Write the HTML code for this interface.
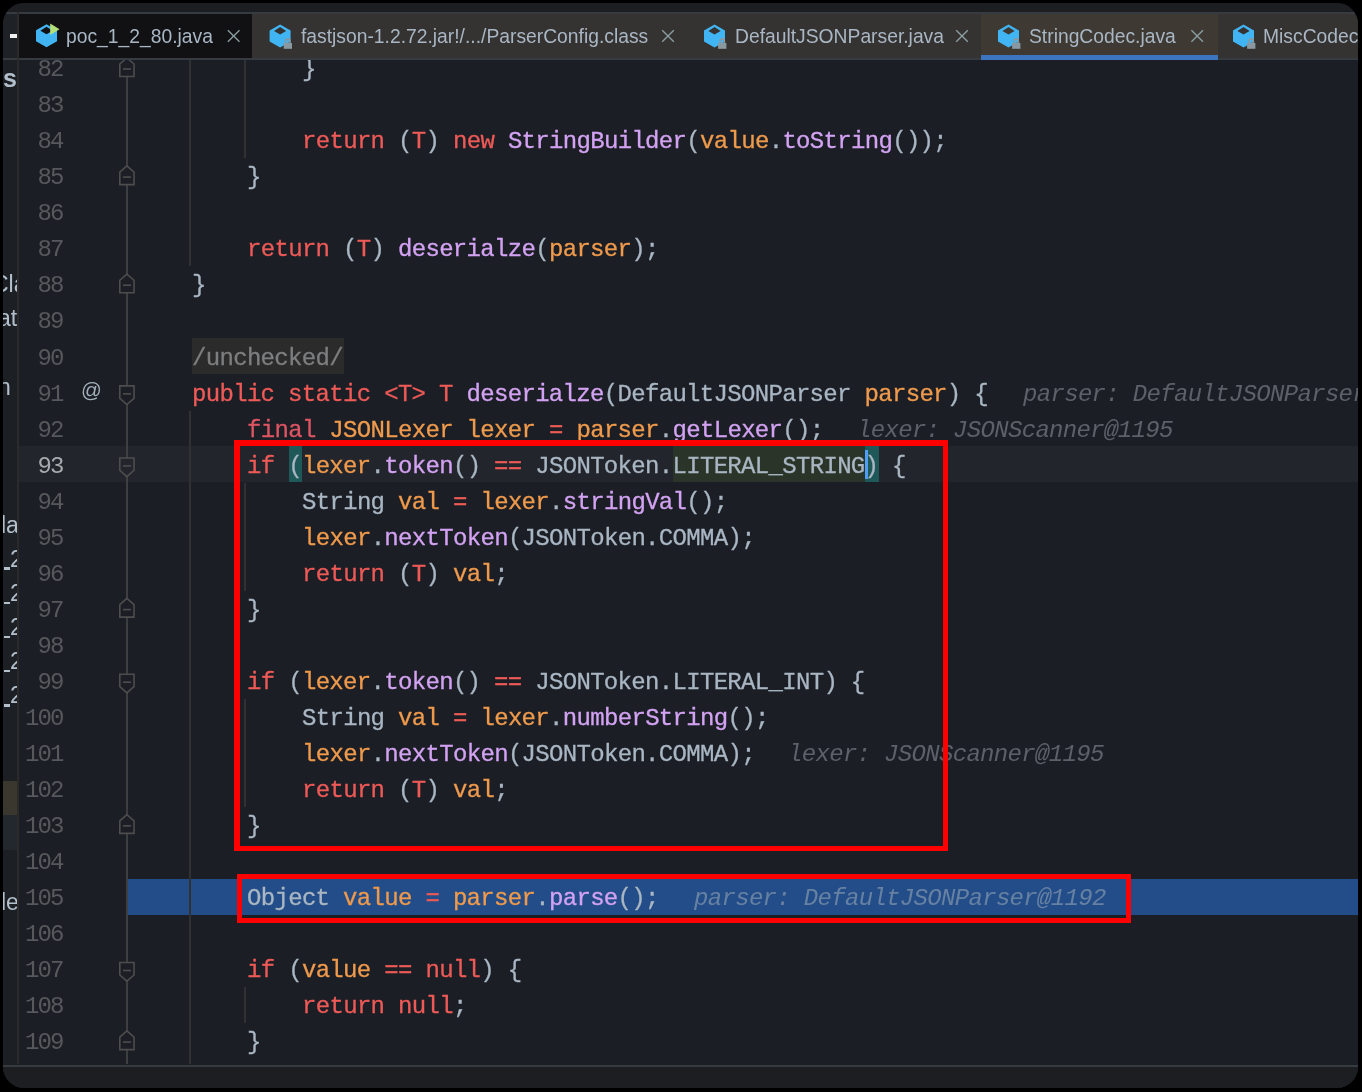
<!DOCTYPE html>
<html><head><meta charset="utf-8">
<style>
.ln,.hint,.num,.tabtxt,.side,.aa{will-change:transform}
html,body{margin:0;padding:0;background:#000;width:1362px;height:1092px;overflow:hidden}
#win{position:absolute;left:3px;top:3px;width:1355.4px;height:1085px;border-radius:21px;overflow:hidden;background:#1c1e22}
.abs{position:absolute}
.ln,.hint,.num{position:absolute;font-family:"Liberation Mono",monospace;font-size:24px;line-height:36px;letter-spacing:-0.680px;white-space:pre;height:36px;-webkit-text-stroke:0.3px currentColor}
.kw{color:#ee5a57} .kw2{color:#dd5563} .fn{color:#d3a2f2} .var{color:#ef9a4c} .txt{color:#a9b6c3}
.ident{color:#a9b6c3}
.brace{color:#a9b6c3}
.fold{color:#7d7e7f}
.hint{color:#5c6068;font-style:italic;-webkit-text-stroke:0}
.hint.sel{color:#6781a3}
.num{-webkit-text-stroke:0;color:#56585c;left:0;width:62.5px;text-align:right;letter-spacing:-1.9px}
.num.cur{color:#a7abae}
.tabtxt{position:absolute;top:15.2px;height:44px;line-height:44px;font-family:"Liberation Sans",sans-serif;font-size:19.3px;color:#a9b6c4;white-space:pre}
.side{position:absolute;left:0;font-family:"Liberation Sans",sans-serif;font-size:23px;line-height:30px;color:#b3c0cc;white-space:pre}
</style></head><body>
<div id="win">
  <!-- frame top strip -->
  <div class="abs" style="left:0;top:0;width:1356px;height:9px;background:#1c1e22"></div>
  <div class="abs" style="left:0;top:9px;width:1356px;height:2px;background:#363b42"></div>
  <!-- tab bar -->
  <div class="abs" style="left:0;top:11px;width:1356px;height:44px;background:#1e2126"></div>
  <div class="abs" style="left:16px;top:11px;width:233px;height:44px;background:#111113"></div>
  <div class="abs" style="left:249px;top:11px;width:729px;height:44px;background:#353331"></div>
  <div class="abs" style="left:978px;top:11px;width:237px;height:44px;background:#3e3a33"></div>
  <div class="abs" style="left:1215px;top:11px;width:141px;height:44px;background:#353331"></div>
  <div class="abs" style="left:0;top:55px;width:1356px;height:2px;background:#363b42"></div>
  <div class="abs" style="left:978px;top:52px;width:237px;height:5px;background:#3d74c0"></div>
  <!-- editor bg -->
  <div class="abs" style="left:0;top:57px;width:1356px;height:1004px;background:#1b1e25"></div>
  <!-- sidebar -->
  <div class="abs" style="left:0;top:57px;width:14px;height:1004px;background:#1c1f24"></div>
  <div class="abs" style="left:14px;top:9px;width:2px;height:1052px;background:#2b2a29"></div>
  <!-- bottom -->
  <div class="abs" style="left:0;top:1061.8px;width:1356px;height:1.8px;background:#363b42"></div>
  <div class="abs" style="left:0;top:1063.6px;width:1356px;height:22px;background:#1c1e22"></div>
</div>
<!-- page-level absolute content (coordinates in image px) -->
<div class="abs" style="left:3px;top:60px;width:1355.4px;height:1004.8px;overflow:hidden">
 <div class="abs" style="left:-3px;top:-60px;width:1362px;height:1092px">
  <!-- current line 93 -->
  <div class="abs" style="left:19px;top:445.8px;width:1340px;height:36.2px;background:#22252c"></div>
  <div class="abs" style="left:192.4px;top:338px;width:151.2px;height:36px;background:#2b2b2c"></div>
  <div class="abs" style="left:288.5px;top:446px;width:13.7px;height:36px;background:#1f5859"></div>
  <div class="abs" style="left:865px;top:446px;width:14px;height:36px;background:#1f5859"></div>
  <div class="abs" style="left:673px;top:446.4px;width:192.2px;height:35.6px;background:#2a3428"></div>
  <!-- selection line 105 -->
  <div class="abs" style="left:128px;top:879px;width:1231px;height:36px;background:#234d88"></div>
  <!-- indent guides -->
  <div class="abs" style="left:189px;top:60px;width:1.5px;height:206.44px;background:#303133"></div>
  <div class="abs" style="left:189px;top:410.60px;width:1.5px;height:653.40px;background:#303133"></div>
  <div class="abs" style="left:244px;top:60px;width:1.5px;height:98.32px;background:#303133"></div>
  <div class="abs" style="left:244px;top:482.68px;width:1.5px;height:108px;background:#303133"></div>
  <div class="abs" style="left:244px;top:698.92px;width:1.5px;height:108px;background:#303133"></div>
  <div class="abs" style="left:244px;top:987.24px;width:1.5px;height:36px;background:#303133"></div>
  <!-- fold line + markers -->
  <svg class="abs" style="left:0;top:0" width="1362" height="1092">
   <path d="M127,60 V1064" stroke="#4a4a4a" stroke-width="1.5"/>
   <path d="M119.8,76.5 H134 V64.0 L126.9,57.8 L119.8,64.0 Z" fill="#1b1e25" stroke="#4d4d4d" stroke-width="1.6"/>
<path d="M123,69.0 H131" stroke="#4d4d4d" stroke-width="1.6"/>
<path d="M119.8,184.62 H134 V172.12 L126.9,165.92000000000002 L119.8,172.12 Z" fill="#1b1e25" stroke="#4d4d4d" stroke-width="1.6"/>
<path d="M123,177.12 H131" stroke="#4d4d4d" stroke-width="1.6"/>
<path d="M119.8,292.74 H134 V280.24 L126.9,274.04 L119.8,280.24 Z" fill="#1b1e25" stroke="#4d4d4d" stroke-width="1.6"/>
<path d="M123,285.24 H131" stroke="#4d4d4d" stroke-width="1.6"/>
<path d="M119.8,385.86 H134 V398.36 L126.9,404.56 L119.8,398.36 Z" fill="#1b1e25" stroke="#4d4d4d" stroke-width="1.6"/>
<path d="M123,393.86 H131" stroke="#4d4d4d" stroke-width="1.6"/>
<path d="M119.8,457.94 H134 V470.44 L126.9,476.64 L119.8,470.44 Z" fill="#22252c" stroke="#4d4d4d" stroke-width="1.6"/>
<path d="M123,465.94 H131" stroke="#4d4d4d" stroke-width="1.6"/>
<path d="M119.8,617.1 H134 V604.6 L126.9,598.4 L119.8,604.6 Z" fill="#1b1e25" stroke="#4d4d4d" stroke-width="1.6"/>
<path d="M123,609.6 H131" stroke="#4d4d4d" stroke-width="1.6"/>
<path d="M119.8,674.18 H134 V686.68 L126.9,692.88 L119.8,686.68 Z" fill="#1b1e25" stroke="#4d4d4d" stroke-width="1.6"/>
<path d="M123,682.18 H131" stroke="#4d4d4d" stroke-width="1.6"/>
<path d="M119.8,833.34 H134 V820.84 L126.9,814.64 L119.8,820.84 Z" fill="#1b1e25" stroke="#4d4d4d" stroke-width="1.6"/>
<path d="M123,825.84 H131" stroke="#4d4d4d" stroke-width="1.6"/>
<path d="M119.8,962.5 H134 V975.0 L126.9,981.2 L119.8,975.0 Z" fill="#1b1e25" stroke="#4d4d4d" stroke-width="1.6"/>
<path d="M123,970.5 H131" stroke="#4d4d4d" stroke-width="1.6"/>
<path d="M119.8,1049.58 H134 V1037.08 L126.9,1030.8799999999999 L119.8,1037.08 Z" fill="#1b1e25" stroke="#4d4d4d" stroke-width="1.6"/>
<path d="M123,1042.08 H131" stroke="#4d4d4d" stroke-width="1.6"/>
  </svg>
  <div class="abs aa" style="left:80.6px;top:372.06px;font-family:'Liberation Sans',sans-serif;font-size:20.5px;line-height:36px;color:#a3b0b9">@</div>
  <div class="num" style="top:52.20px">82</div>
<div class="num" style="top:88.24px">83</div>
<div class="num" style="top:124.28px">84</div>
<div class="num" style="top:160.32px">85</div>
<div class="num" style="top:196.36px">86</div>
<div class="num" style="top:232.40px">87</div>
<div class="num" style="top:268.44px">88</div>
<div class="num" style="top:304.48px">89</div>
<div class="num" style="top:340.52px">90</div>
<div class="num" style="top:376.56px">91</div>
<div class="num" style="top:412.60px">92</div>
<div class="num cur" style="top:448.64px">93</div>
<div class="num" style="top:484.68px">94</div>
<div class="num" style="top:520.72px">95</div>
<div class="num" style="top:556.76px">96</div>
<div class="num" style="top:592.80px">97</div>
<div class="num" style="top:628.84px">98</div>
<div class="num" style="top:664.88px">99</div>
<div class="num" style="top:700.92px">100</div>
<div class="num" style="top:736.96px">101</div>
<div class="num" style="top:773.00px">102</div>
<div class="num" style="top:809.04px">103</div>
<div class="num" style="top:845.08px">104</div>
<div class="num" style="top:881.12px">105</div>
<div class="num" style="top:917.16px">106</div>
<div class="num" style="top:953.20px">107</div>
<div class="num" style="top:989.24px">108</div>
<div class="num" style="top:1025.28px">109</div>
  <div class="ln" style="top:52.20px;left:302.24px"><span class="txt">}</span></div>
<div class="ln" style="top:88.24px;left:137.60px"></div>
<div class="ln" style="top:124.28px;left:302.24px"><span class="kw">return</span><span class="txt"> (</span><span class="kw">T</span><span class="txt">) </span><span class="kw">new</span><span class="txt"> </span><span class="fn">StringBuilder</span><span class="txt">(</span><span class="var">value</span><span class="txt">.</span><span class="fn">toString</span><span class="txt">());</span></div>
<div class="ln" style="top:160.32px;left:247.36px"><span class="txt">}</span></div>
<div class="ln" style="top:196.36px;left:137.60px"></div>
<div class="ln" style="top:232.40px;left:247.36px"><span class="kw">return</span><span class="txt"> (</span><span class="kw">T</span><span class="txt">) </span><span class="fn">deserialze</span><span class="txt">(</span><span class="var">parser</span><span class="txt">);</span></div>
<div class="ln" style="top:268.44px;left:192.48px"><span class="txt">}</span></div>
<div class="ln" style="top:304.48px;left:137.60px"></div>
<div class="ln" style="top:340.52px;left:192.48px"><span class="fold">/unchecked/</span></div>
<div class="ln" style="top:376.56px;left:192.48px"><span class="kw">public</span><span class="txt"> </span><span class="kw">static</span><span class="txt"> </span><span class="kw">&lt;T&gt;</span><span class="txt"> </span><span class="kw">T</span><span class="txt"> </span><span class="fn">deserialze</span><span class="txt">(DefaultJSONParser </span><span class="var">parser</span><span class="txt">) {</span></div>
<div class="hint" style="top:376.56px;left:1023px">parser: DefaultJSONParser@1192</div>
<div class="ln" style="top:412.60px;left:247.36px"><span class="kw2">final</span><span class="txt"> </span><span class="var">JSONLexer</span><span class="txt"> </span><span class="var">lexer</span><span class="txt"> </span><span class="kw">=</span><span class="txt"> </span><span class="var">parser</span><span class="txt">.</span><span class="fn">getLexer</span><span class="txt">();</span></div>
<div class="hint" style="top:412.60px;left:857px">lexer: JSONScanner@1195</div>
<div class="ln" style="top:448.64px;left:247.36px"><span class="kw">if</span><span class="txt"> </span><span class="brace">(</span><span class="var">lexer</span><span class="txt">.</span><span class="fn">token</span><span class="txt">() </span><span class="kw">==</span><span class="txt"> JSONToken.</span><span class="ident">LITERAL_STRING</span><span class="brace">)</span><span class="txt"> {</span></div>
<div class="ln" style="top:484.68px;left:302.24px"><span class="txt">String </span><span class="var">val</span><span class="txt"> </span><span class="kw">=</span><span class="txt"> </span><span class="var">lexer</span><span class="txt">.</span><span class="fn">stringVal</span><span class="txt">();</span></div>
<div class="ln" style="top:520.72px;left:302.24px"><span class="var">lexer</span><span class="txt">.</span><span class="fn">nextToken</span><span class="txt">(JSONToken.COMMA);</span></div>
<div class="ln" style="top:556.76px;left:302.24px"><span class="kw">return</span><span class="txt"> (</span><span class="kw">T</span><span class="txt">) </span><span class="var">val</span><span class="txt">;</span></div>
<div class="ln" style="top:592.80px;left:247.36px"><span class="txt">}</span></div>
<div class="ln" style="top:628.84px;left:137.60px"></div>
<div class="ln" style="top:664.88px;left:247.36px"><span class="kw">if</span><span class="txt"> (</span><span class="var">lexer</span><span class="txt">.</span><span class="fn">token</span><span class="txt">() </span><span class="kw">==</span><span class="txt"> JSONToken.LITERAL_INT) {</span></div>
<div class="ln" style="top:700.92px;left:302.24px"><span class="txt">String </span><span class="var">val</span><span class="txt"> </span><span class="kw">=</span><span class="txt"> </span><span class="var">lexer</span><span class="txt">.</span><span class="fn">numberString</span><span class="txt">();</span></div>
<div class="ln" style="top:736.96px;left:302.24px"><span class="var">lexer</span><span class="txt">.</span><span class="fn">nextToken</span><span class="txt">(JSONToken.COMMA);</span></div>
<div class="hint" style="top:736.96px;left:788.2px">lexer: JSONScanner@1195</div>
<div class="ln" style="top:773.00px;left:302.24px"><span class="kw">return</span><span class="txt"> (</span><span class="kw">T</span><span class="txt">) </span><span class="var">val</span><span class="txt">;</span></div>
<div class="ln" style="top:809.04px;left:247.36px"><span class="txt">}</span></div>
<div class="ln" style="top:845.08px;left:137.60px"></div>
<div class="ln" style="top:881.12px;left:247.36px"><span class="txt">Object </span><span class="var">value</span><span class="txt"> </span><span class="kw">=</span><span class="txt"> </span><span class="var">parser</span><span class="txt">.</span><span class="fn">parse</span><span class="txt">();</span></div>
<div class="hint sel" style="top:881.12px;left:694px">parser: DefaultJSONParser@1192</div>
<div class="ln" style="top:917.16px;left:137.60px"></div>
<div class="ln" style="top:953.20px;left:247.36px"><span class="kw">if</span><span class="txt"> (</span><span class="var">value</span><span class="txt"> </span><span class="kw">==</span><span class="txt"> </span><span class="kw">null</span><span class="txt">) {</span></div>
<div class="ln" style="top:989.24px;left:302.24px"><span class="kw">return</span><span class="txt"> </span><span class="kw">null</span><span class="txt">;</span></div>
<div class="ln" style="top:1025.28px;left:247.36px"><span class="txt">}</span></div>
  <!-- caret -->
  <div class="abs" style="left:865.2px;top:449.5px;width:3px;height:29.5px;background:#4d9ef8"></div>
 </div>
</div>
<!-- tabs text and icons -->
<div class="tabtxt" style="left:66.4px">poc_1_2_80.java</div>
<div class="tabtxt" style="left:300.6px">fastjson-1.2.72.jar!/.../ParserConfig.class</div>
<div class="tabtxt" style="left:735px">DefaultJSONParser.java</div>
<div class="tabtxt" style="left:1028.5px">StringCodec.java</div>
<div class="tabtxt" style="left:1263.2px;width:96px;overflow:hidden">MiscCodec.java</div>
<div class="abs" style="left:9.5px;top:33.5px;width:7.5px;height:4.5px;background:#f0f0f0"></div>
<svg class="abs" style="left:0;top:0" width="1362" height="1092">
<g transform="translate(36,24.3)"><path d="M10.5,0 L21,6 L21,17 L10.5,23 L0,17 L0,6 Z" fill="#41b5f3"/><path d="M10.5,2.5 L16.6,6.4 L10.5,10 L4.4,6.4 Z" fill="#111113"/><path d="M14.2,-0.8 L23.5,5 L14.2,10.6 Z" fill="#b4e07a"/></g>
<g transform="translate(269.6,24.5)"><path d="M10.5,0 L21,6 L21,17 L10.5,23 L0,17 L0,6 Z" fill="#41b5f3"/><path d="M10.5,2.5 L16.6,6.4 L10.5,10 L4.4,6.4 Z" fill="#353331"/><path d="M16.2,19 V16.5 a2.05,2.05 0 0 1 4.1,0 V19" fill="none" stroke="#8a98a2" stroke-width="1.7"/><rect x="14.1" y="18.5" width="8.3" height="5.8" fill="#8a98a2"/></g>
<g transform="translate(704,24.5)"><path d="M10.5,0 L21,6 L21,17 L10.5,23 L0,17 L0,6 Z" fill="#41b5f3"/><path d="M10.5,2.5 L16.6,6.4 L10.5,10 L4.4,6.4 Z" fill="#353331"/><path d="M16.2,19 V16.5 a2.05,2.05 0 0 1 4.1,0 V19" fill="none" stroke="#8a98a2" stroke-width="1.7"/><rect x="14.1" y="18.5" width="8.3" height="5.8" fill="#8a98a2"/></g>
<g transform="translate(998,24.5)"><path d="M10.5,0 L21,6 L21,17 L10.5,23 L0,17 L0,6 Z" fill="#41b5f3"/><path d="M10.5,2.5 L16.6,6.4 L10.5,10 L4.4,6.4 Z" fill="#3e3a33"/><path d="M16.2,19 V16.5 a2.05,2.05 0 0 1 4.1,0 V19" fill="none" stroke="#8a98a2" stroke-width="1.7"/><rect x="14.1" y="18.5" width="8.3" height="5.8" fill="#8a98a2"/></g>
<g transform="translate(1233,24.5)"><path d="M10.5,0 L21,6 L21,17 L10.5,23 L0,17 L0,6 Z" fill="#41b5f3"/><path d="M10.5,2.5 L16.6,6.4 L10.5,10 L4.4,6.4 Z" fill="#353331"/><path d="M16.2,19 V16.5 a2.05,2.05 0 0 1 4.1,0 V19" fill="none" stroke="#8a98a2" stroke-width="1.7"/><rect x="14.1" y="18.5" width="8.3" height="5.8" fill="#8a98a2"/></g>
<path d="M227.89999999999998,30.2 L239.5,41.8 M239.5,30.2 L227.89999999999998,41.8" stroke="#8c9ea2" stroke-width="1.35"/>
<path d="M662.2,30.2 L673.8,41.8 M673.8,30.2 L662.2,41.8" stroke="#8c9ea2" stroke-width="1.35"/>
<path d="M956.2,30.2 L967.8,41.8 M967.8,30.2 L956.2,41.8" stroke="#8c9ea2" stroke-width="1.35"/>
<path d="M1191.4,30.2 L1203.0,41.8 M1203.0,30.2 L1191.4,41.8" stroke="#8c9ea2" stroke-width="1.35"/>
</svg>
<!-- sidebar clipped text -->
<div class="abs" style="left:3px;top:60px;width:14px;height:1004px;overflow:hidden">
 <div class="abs" style="left:-3px;top:-60px;width:400px;height:1092px">
  <div class="abs" style="left:3px;top:781px;width:14px;height:34px;background:#3a372f"></div>
  <div class="abs" style="left:3px;top:815px;width:14px;height:35px;background:#23272e"></div>
<div class="side" style="left:3.2px;top:62.63px;font-size:25px;font-weight:bold;">s</div>
<div class="side" style="left:-8.1px;top:268.83px;font-size:23px;">Cla</div>
<div class="side" style="left:-1.8px;top:303.03px;font-size:23px;">at</div>
<div class="side" style="left:-1.8px;top:372.03px;font-size:23px;">n</div>
<div class="side" style="left:1.2px;top:510.03px;font-size:23px;">la</div>
<div class="side" style="left:10.2px;top:543.63px;font-size:23px;">2</div>
<div class="abs" style="left:3.5px;top:567.40px;width:6.4px;height:2.4px;background:#b3c0cc"></div>
<div class="side" style="left:10.2px;top:577.83px;font-size:23px;">2</div>
<div class="abs" style="left:3.5px;top:601.60px;width:6.4px;height:2.4px;background:#b3c0cc"></div>
<div class="side" style="left:10.2px;top:612.03px;font-size:23px;">2</div>
<div class="abs" style="left:3.5px;top:635.80px;width:6.4px;height:2.4px;background:#b3c0cc"></div>
<div class="side" style="left:10.2px;top:646.23px;font-size:23px;">2</div>
<div class="abs" style="left:3.5px;top:670.00px;width:6.4px;height:2.4px;background:#b3c0cc"></div>
<div class="side" style="left:10.2px;top:680.43px;font-size:23px;">2</div>
<div class="abs" style="left:3.5px;top:704.20px;width:6.4px;height:2.4px;background:#b3c0cc"></div>
<div class="side" style="left:1.2px;top:887.03px;font-size:23px;">le</div>
 </div>
</div>
<!-- red annotation boxes -->
<div class="abs" style="left:234px;top:440px;width:703px;height:400px;border-style:solid;border-color:#ff0000;border-width:6px 5px 5px 6px"></div>
<div class="abs" style="left:237px;top:874px;width:884px;height:38.5px;border:5px solid #ff0000"></div>
</body></html>
